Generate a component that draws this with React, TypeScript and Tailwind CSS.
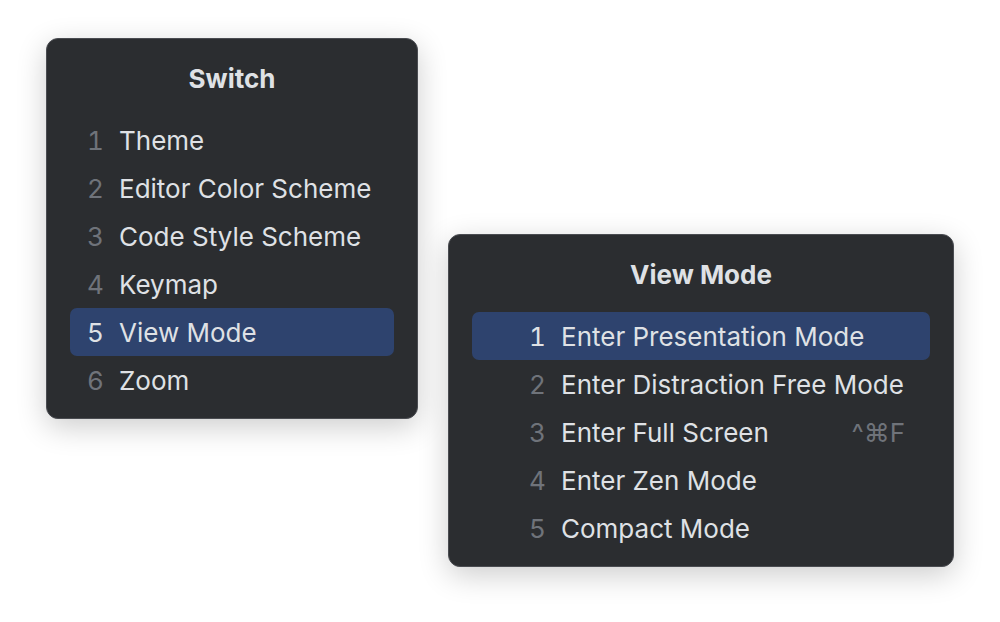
import React from "react";

interface MenuItem {
	label: string;
	shortcut?: string;
}

interface PopupProps {
	title: string;
	items: MenuItem[];
	selected: number;
	indent: "narrow" | "wide";
	width: string;
	className?: string;
}

const Popup = ({ title, items, selected, indent, width, className }: PopupProps) => {
	return (
		<div
			className={`${width} ${className ?? ""} rounded-[12px] border border-[#4a4c51] bg-[#2b2d30] px-[23px] pt-[23px] pb-[14px] shadow-[0_8px_30px_rgba(0,0,0,0.2)]`}
		>
			<div className="mb-[22px] flex h-8 items-center justify-center text-[26px] font-bold text-[#dfe1e5]">
				{title}
			</div>
			<div className="flex flex-col">
				{items.map((item, index) => (
					<div
						className={`flex h-12 items-center whitespace-nowrap rounded-[7px] pr-[25px] ${
							index === selected ? "bg-[#2e436e]" : ""
						} ${indent === "wide" ? "pl-[57px]" : "pl-[17px]"}`}
						key={item.label}
					>
						<span
							className={`w-8 shrink-0 tabular-nums ${
								index === selected ? "text-[#dfe1e5]" : "text-[#6f737a]"
							}`}
						>
							{index + 1}
						</span>
						<span className="text-[#dfe1e5]">{item.label}</span>
						<div className="grow" />
						{item.shortcut && <span className="text-[#6f737a]">{item.shortcut}</span>}
					</div>
				))}
			</div>
		</div>
	);
};

export default function App() {
	const switchItems: MenuItem[] = [
		{ label: "Theme" },
		{ label: "Editor Color Scheme" },
		{ label: "Code Style Scheme" },
		{ label: "Keymap" },
		{ label: "View Mode" },
		{ label: "Zoom" },
	];

	const viewModeItems: MenuItem[] = [
		{ label: "Enter Presentation Mode" },
		{ label: "Enter Distraction Free Mode" },
		{ label: "Enter Full Screen", shortcut: "^⌘F" },
		{ label: "Enter Zen Mode" },
		{ label: "Compact Mode" },
	];

	return (
		<div className="h-[622px] w-[1000px] overflow-hidden bg-white font-['Inter',sans-serif] text-[26px]">
			<div className="flex items-start gap-[30px] pt-[38px] pl-[46px]">
				<Popup indent="narrow" items={switchItems} selected={4} title="Switch" width="w-[372px]" />
				<Popup
					className="mt-[196px]"
					indent="wide"
					items={viewModeItems}
					selected={0}
					title="View Mode"
					width="w-[506px]"
				/>
			</div>
		</div>
	);
}
